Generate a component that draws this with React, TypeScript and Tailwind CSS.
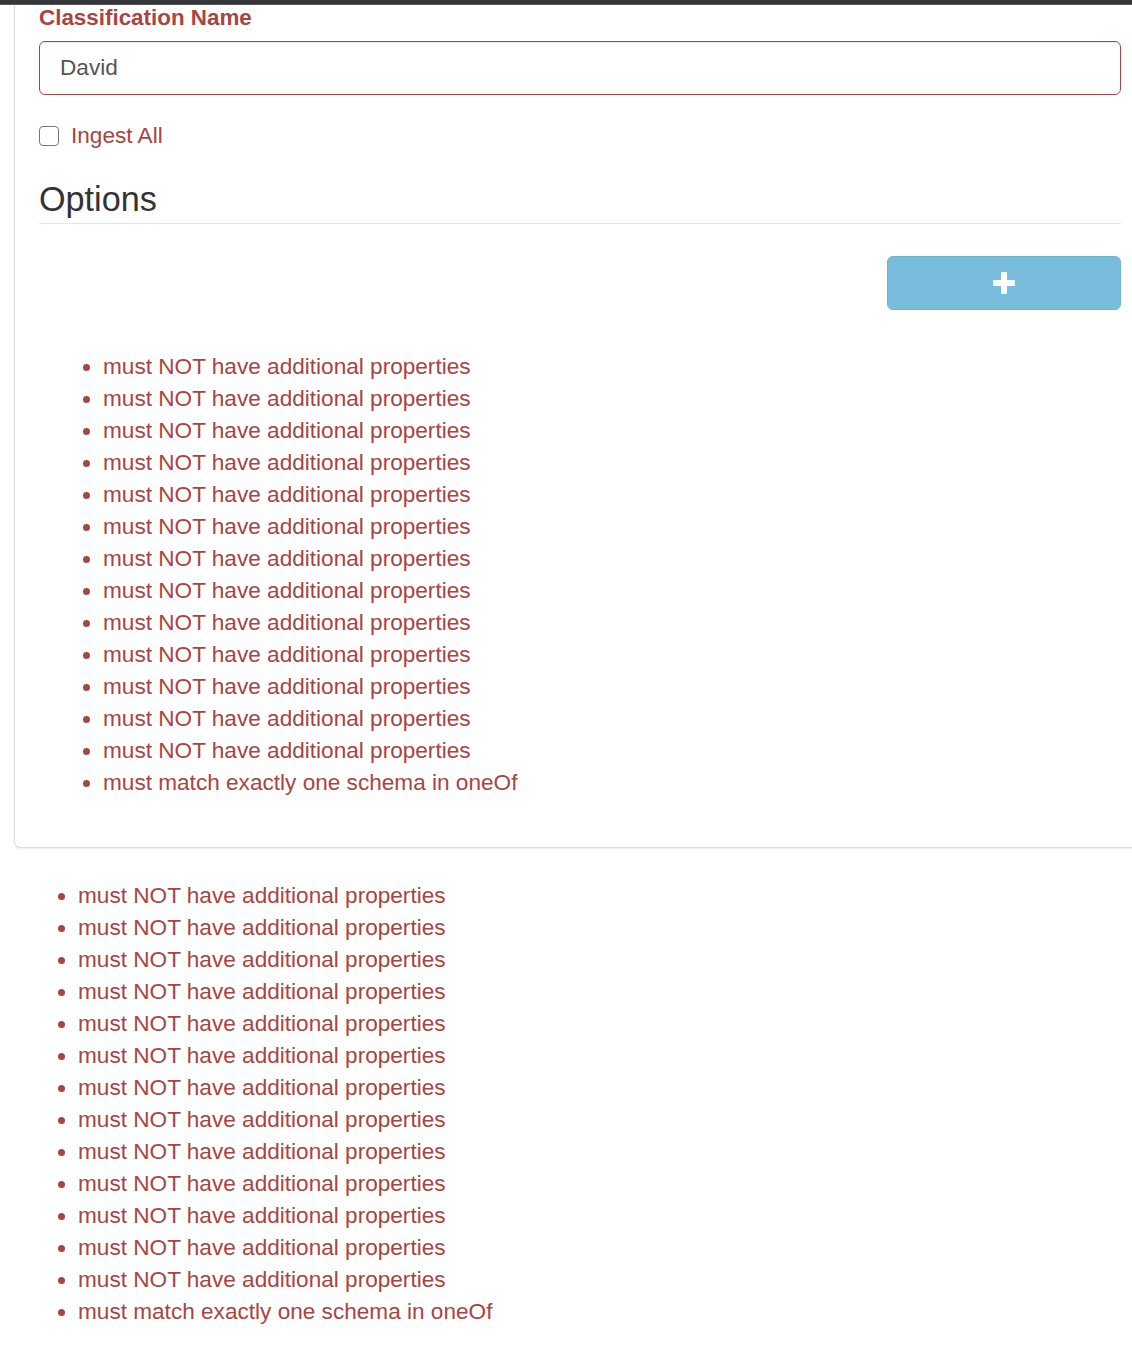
import React from "react";

const Err = ({ text }: { text: string }) => (
  <li className="leading-[32px]">{text}</li>
);

const items = [
  ...Array(13).fill("must NOT have additional properties"),
  "must match exactly one schema in oneOf",
];

export default function App() {
  return (
    <div
      className="relative w-[1132px] h-[1356px] overflow-hidden bg-white text-[22.6px] text-[#a94442]"
      style={{ fontFamily: '"Liberation Sans", Arial, Helvetica, sans-serif' }}
    >
      <div className="absolute top-0 left-0 right-0 h-[5px] bg-[#36373b] border-b border-[#55565a] z-10" />
      <div className="ml-[14px] w-[1131px] border-l border-b border-[#dddddd] rounded-bl-[6px] shadow-[0_1px_2px_rgba(0,0,0,0.08)] px-[24px] pt-[2px] pb-[48px]">
        <label className="block font-bold text-[22.4px] leading-[32px] mb-[7px]">Classification Name</label>
        <div className="h-[54px] border border-[#a94442] rounded-[6px] flex items-center px-[20px] text-[#555555] shadow-[inset_0_1px_1px_rgba(0,0,0,0.075)]">
          David
        </div>
        <div className="mt-[25px] flex items-center h-[32px]">
          <span className="w-[20px] h-[20px] border-[1.5px] border-[#767676] rounded-[4px] bg-white" />
          <span className="ml-[12px]">Ingest All</span>
        </div>
        <div className="mt-[23px] text-[34.2px] leading-[48px] text-[#333333] border-b border-[#e5e5e5]">
          Options
        </div>
        <div className="mt-[32px] flex justify-end">
          <div className="w-[234px] h-[54px] rounded-[6px] bg-[#78bedc] border border-[#6db4d2] flex items-center justify-center">
            <svg width="22" height="22" viewBox="0 0 22 22">
              <rect x="8" y="0" width="6" height="22" rx="1" fill="white" />
              <rect x="0" y="8" width="22" height="6" rx="1" fill="white" />
            </svg>
          </div>
        </div>
        <ul className="list-disc pl-[64px] mt-[41px]">
          {items.map((t, i) => (
            <Err key={i} text={t} />
          ))}
        </ul>
      </div>
      <ul className="list-disc ml-[14px] pl-[64px] mt-[32px]">
        {items.map((t, i) => (
          <Err key={i} text={t} />
        ))}
      </ul>
    </div>
  );
}
